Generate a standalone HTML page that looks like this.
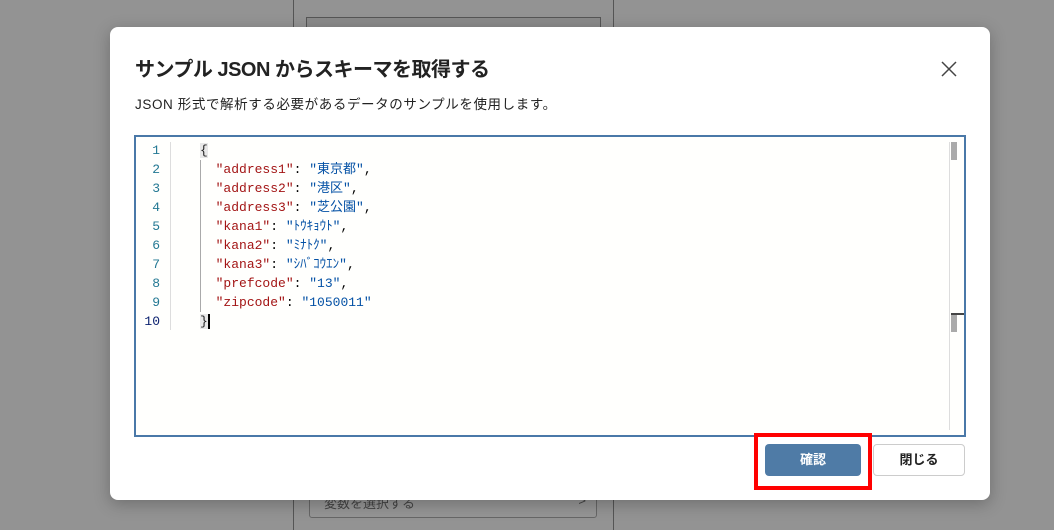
<!DOCTYPE html>
<html><head><meta charset="utf-8"><style>
*{margin:0;padding:0;box-sizing:border-box}
body{width:1054px;height:530px;background:#939393;position:relative;overflow:hidden;font-family:"Liberation Sans","Noto Sans CJK JP",sans-serif}
.abs{position:absolute}
.code{font-family:"Liberation Mono","Noto Sans CJK JP",monospace;font-size:13px;line-height:19px;white-space:pre}
.k{color:#a31515}.s{color:#0451a5}.p{color:#222}
</style></head><body>
<div class="abs" style="left:293px;top:0;width:321px;height:530px;border-left:1px solid #555;border-right:1px solid #555;background:#939393"></div>
<div class="abs" style="left:306px;top:17px;width:295px;height:20px;border:1px solid #555;background:#8a8a8a"></div>
<div class="abs" style="left:309px;top:490px;width:288px;height:28px;border:1px solid #666;border-radius:3px;background:#959595;color:#444;font-size:13px;padding:2px 0 0 14px">変数を選択する<span style="position:absolute;right:10px;top:2px">&gt;</span></div>

<div class="abs" style="left:110px;top:27px;width:880px;height:473px;background:#fff;border-radius:8px;box-shadow:0 4px 16px rgba(0,0,0,.25)"></div>
<div class="abs" style="left:135px;top:53px;font-size:20px;font-weight:bold;color:#222;letter-spacing:-0.5px">サンプル JSON からスキーマを取得する</div>
<div class="abs" style="left:135px;top:93px;font-size:13.5px;color:#222;letter-spacing:0.6px">JSON 形式で解析する必要があるデータのサンプルを使用します。</div>
<svg class="abs" style="left:940px;top:60px" width="18" height="18"><path d="M2 2L16 16M16 2L2 16" stroke="#444" stroke-width="1.5"/></svg>

<div class="abs" style="left:134px;top:135px;width:832px;height:302px;border:2px solid #4a78a8;background:#fffffd"></div>
<div class="abs" style="left:170px;top:142px;width:1px;height:188px;background:#ddd"></div>
<div class="abs" style="left:949px;top:142px;width:1px;height:288px;background:#ddd"></div>
<div class="abs" style="left:951px;top:142px;width:6px;height:18px;background:#aaa"></div>
<div class="abs" style="left:951px;top:313px;width:13px;height:2px;background:#444"></div>
<div class="abs" style="left:951px;top:315px;width:6px;height:17px;background:#aaa"></div>
<div class="abs code" style="left:136px;top:141px;width:24px;text-align:right;color:#237893">1
2
3
4
5
6
7
8
9
<span style="color:#0b216f">10</span></div>
<div class="abs" style="left:200px;top:160px;width:1px;height:152px;background:#aaa"></div>
<div class="abs code" style="left:200px;top:141px"><span class="p" style="background:#e8e8e8">{</span>
  <span class="k">"address1"</span>: <span class="s">"東京都"</span>,
  <span class="k">"address2"</span>: <span class="s">"港区"</span>,
  <span class="k">"address3"</span>: <span class="s">"芝公園"</span>,
  <span class="k">"kana1"</span>: <span class="s">"ﾄｳｷｮｳﾄ"</span>,
  <span class="k">"kana2"</span>: <span class="s">"ﾐﾅﾄｸ"</span>,
  <span class="k">"kana3"</span>: <span class="s">"ｼﾊﾞｺｳｴﾝ"</span>,
  <span class="k">"prefcode"</span>: <span class="s">"13"</span>,
  <span class="k">"zipcode"</span>: <span class="s">"1050011"</span>
<span class="p" style="background:#e8e8e8;border-right:2px solid #000">}</span></div>

<div class="abs" style="left:754px;top:433px;width:118px;height:57px;border:4px solid #f00"></div>
<div class="abs" style="left:765px;top:444px;width:96px;height:32px;background:#4f7ba6;border-radius:4px;color:#fff;font-size:13px;font-weight:bold;text-align:center;line-height:32px">確認</div>
<div class="abs" style="left:873px;top:444px;width:92px;height:32px;background:#fff;border:1px solid #ccc;border-radius:4px;color:#222;font-size:13px;font-weight:bold;text-align:center;line-height:30px">閉じる</div>
</body></html>
